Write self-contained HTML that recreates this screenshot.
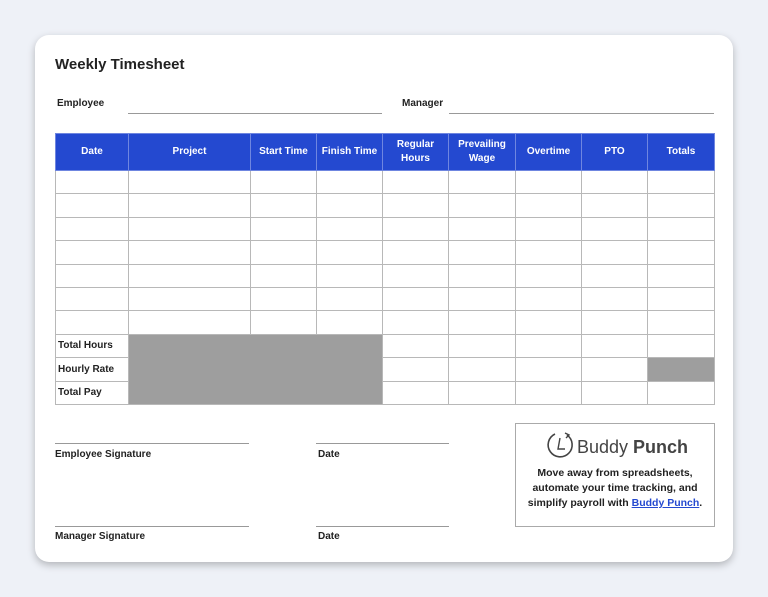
<!DOCTYPE html>
<html><head><style>
body{margin:0;width:768px;height:597px;background:#eef1f7;font-family:"Liberation Sans",sans-serif;position:relative;overflow:hidden}
.card{position:absolute;left:35px;top:35px;width:698px;height:527px;background:#fff;border-radius:14px;box-shadow:0 3px 8px rgba(0,0,0,.25)}
.a{position:absolute;color:#222}
table{position:absolute;left:55px;top:133px;border-collapse:collapse;table-layout:fixed}
td,th{border:1px solid #b8b8b8;padding:0;font-size:10px}
th{background:#2449d0;color:#fff;font-weight:bold;height:36px;border-color:#6f86e0;line-height:14px}
td{height:22.4px}
td.l{font-weight:bold;font-size:10px;padding-left:2px;color:#222}
.g{background:#9e9e9e}
.ln{position:absolute;height:1px;background:#999}
</style></head><body>
<div class="card"></div>
<div class="a" style="left:55px;top:56px;font-size:15px;font-weight:bold">Weekly Timesheet</div>
<div class="a" style="left:57px;top:98px;font-size:10px;font-weight:bold">Employee</div>
<div class="ln" style="left:128px;top:113px;width:254px"></div>
<div class="a" style="left:402px;top:98px;font-size:10px;font-weight:bold">Manager</div>
<div class="ln" style="left:449px;top:113px;width:265px"></div>
<table>
<colgroup><col style="width:73px"><col style="width:122px"><col style="width:66px"><col style="width:66px"><col style="width:66px"><col style="width:67px"><col style="width:66px"><col style="width:66px"><col style="width:67px"></colgroup>
<tr><th>Date</th><th>Project</th><th>Start Time</th><th>Finish Time</th><th>Regular<br>Hours</th><th>Prevailing<br>Wage</th><th>Overtime</th><th>PTO</th><th>Totals</th></tr>
<tr><td></td><td></td><td></td><td></td><td></td><td></td><td></td><td></td><td></td></tr>
<tr><td></td><td></td><td></td><td></td><td></td><td></td><td></td><td></td><td></td></tr>
<tr><td></td><td></td><td></td><td></td><td></td><td></td><td></td><td></td><td></td></tr>
<tr><td></td><td></td><td></td><td></td><td></td><td></td><td></td><td></td><td></td></tr>
<tr><td></td><td></td><td></td><td></td><td></td><td></td><td></td><td></td><td></td></tr>
<tr><td></td><td></td><td></td><td></td><td></td><td></td><td></td><td></td><td></td></tr>
<tr><td></td><td></td><td></td><td></td><td></td><td></td><td></td><td></td><td></td></tr>
<tr><td class="l">Total Hours</td><td class="g" colspan="3" rowspan="3"></td><td></td><td></td><td></td><td></td><td></td></tr>
<tr><td class="l">Hourly Rate</td><td></td><td></td><td></td><td></td><td class="g"></td></tr>
<tr><td class="l">Total Pay</td><td></td><td></td><td></td><td></td><td></td></tr>
</table>
<div class="ln" style="left:55px;top:443px;width:194px"></div>
<div class="ln" style="left:316px;top:443px;width:133px"></div>
<div class="a" style="left:55px;top:449px;font-size:10px;font-weight:bold">Employee Signature</div>
<div class="a" style="left:318px;top:449px;font-size:10px;font-weight:bold">Date</div>
<div class="ln" style="left:55px;top:526px;width:194px"></div>
<div class="ln" style="left:316px;top:526px;width:133px"></div>
<div class="a" style="left:55px;top:531px;font-size:10px;font-weight:bold">Manager Signature</div>
<div class="a" style="left:318px;top:531px;font-size:10px;font-weight:bold">Date</div>
<div style="position:absolute;left:515px;top:423px;width:198px;height:102px;border:1px solid #aaa"></div>
<svg style="position:absolute;left:545px;top:430px" width="30" height="30" viewBox="0 0 30 30"><path d="M22 5 A12 12 0 1 1 10 4" fill="none" stroke="#444" stroke-width="1.6"/><path d="M20 3 l4 2 -3 3" fill="none" stroke="#444" stroke-width="1.4"/><path d="M15 8 L13 19 L20 19" fill="none" stroke="#444" stroke-width="1.4"/></svg>
<div class="a" style="left:577px;top:437px;font-size:18px;color:#444">Buddy <b>Punch</b></div>
<div class="a" style="left:516px;top:466px;width:198px;text-align:center;font-size:10.5px;line-height:15px;font-weight:bold;color:#222">Move away from spreadsheets, automate your time tracking, and simplify payroll with <span style="color:#2449d0;text-decoration:underline">Buddy Punch</span>.</div>
</body></html>
